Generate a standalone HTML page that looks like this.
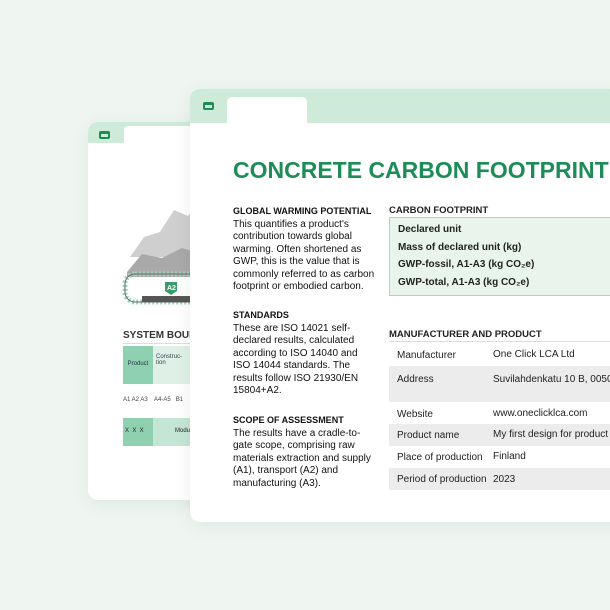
<!DOCTYPE html>
<html><head><style>
*{margin:0;padding:0;box-sizing:border-box}
body{width:610px;height:610px;background:#eff6f2;font-family:"Liberation Sans",sans-serif;position:relative;overflow:hidden;color:#222}
.card{position:absolute;background:#fff;border-radius:10px;box-shadow:0 4px 18px rgba(0,60,30,.08);overflow:hidden}
.hdr{position:absolute;left:0;top:0;right:0;background:#cdebd8}
.ico{position:absolute;width:11px;height:8px;border:2px solid #1f8a52;border-radius:2px;border-top-width:3px}
.p{position:absolute;font-size:10px;line-height:12.5px;color:#111}
.h{font-weight:bold;font-size:9px;margin-bottom:1px}
.row{position:absolute;left:0;width:240px;font-size:10px;color:#222}
.row span{position:absolute;top:0}
</style></head><body>
<!-- back card -->
<div class="card" style="left:88px;top:122px;width:160px;height:378px">
 <div class="hdr" style="height:21px"></div>
 <div style="position:absolute;left:36px;top:4px;width:124px;height:20px;background:#fff;border-radius:4px 0 0 0"></div>
 <div class="ico" style="left:11px;top:9px"></div>
 <svg style="position:absolute;left:34px;top:70px" width="110" height="115">
  <path d="M8 65 L22 45 L38 40 L52 18 L66 24 L82 6 L100 28 L100 65 Z" fill="#cfcfcf"/>
  <path d="M5 80 L20 62 L40 66 L60 56 L80 62 L100 58 L100 85 L5 85Z" fill="#a9a9a9"/>
  <rect x="3" y="82" width="100" height="28" rx="10" fill="none" stroke="#9fd4bb" stroke-width="5" stroke-dasharray="2 2"/>
  <rect x="3" y="82" width="100" height="28" rx="10" fill="none" stroke="#666" stroke-width="1"/>
  <path d="M43 90 h12 v9 l-6 4 l-6 -4z" fill="#3a9c6b"/>
  <text x="45" y="98" font-size="7" fill="#fff" font-weight="bold" font-family="Liberation Sans">A2</text>
  <rect x="20" y="104" width="80" height="6" fill="#555"/>
 </svg>
 <div style="position:absolute;left:35px;top:208px;font-size:10px;font-weight:bold;color:#333;white-space:nowrap">SYSTEM BOUNDARY</div>
 <div style="position:absolute;left:35px;top:221px;width:120px;height:1px;background:#ddd"></div>
 <div style="position:absolute;left:35px;top:224px;width:30px;height:38px;background:#8fd0b0;font-size:6px;text-align:center;padding-top:15px;color:#234">Product</div>
 <div style="position:absolute;left:65px;top:224px;width:95px;height:38px;background:#dff1e7;font-size:6px;padding:8px 0 0 3px;color:#345">Construc-<br>tion</div>
 <div style="position:absolute;left:35px;top:275px;font-size:6px;color:#444">A1 A2 A3 &nbsp;&nbsp; A4-A5 &nbsp; B1</div>
 <div style="position:absolute;left:35px;top:296px;width:30px;height:28px;background:#8fd0b0;font-size:6px;padding:10px 0 0 2px">X &nbsp;X &nbsp;X</div>
 <div style="position:absolute;left:65px;top:296px;width:95px;height:28px;background:#c5e6d5;font-size:6px;padding:10px 0 0 22px">Modules</div>
</div>
<!-- front card -->
<div class="card" style="left:190px;top:89px;width:440px;height:433px">
 <div class="hdr" style="height:34px"></div>
 <div style="position:absolute;left:37px;top:8px;width:80px;height:27px;background:#fff;border-radius:5px 5px 0 0"></div>
 <div class="ico" style="left:13px;top:13px"></div>
 <div style="position:absolute;left:43px;top:68px;font-size:23px;font-weight:bold;color:#1e8c57;white-space:nowrap">CONCRETE CARBON FOOTPRINT</div>
 <div class="p" style="left:43px;top:116px;width:142px"><div class="h">GLOBAL WARMING POTENTIAL</div>This quantifies a product's contribution towards global warming. Often shortened as GWP, this is the value that is commonly referred to as carbon footprint or embodied carbon.</div>
 <div class="p" style="left:43px;top:220px;width:142px"><div class="h">STANDARDS</div>These are ISO 14021 self-declared results, calculated according to ISO 14040 and ISO 14044 standards. The results follow ISO 21930/EN 15804+A2.</div>
 <div class="p" style="left:43px;top:325px;width:142px"><div class="h">SCOPE OF ASSESSMENT</div>The results have a cradle-to-gate scope, comprising raw materials extraction and supply (A1), transport (A2) and manufacturing (A3).</div>
 <div style="position:absolute;left:199px;top:116px;font-size:9.5px;font-weight:bold">CARBON FOOTPRINT</div>
 <div style="position:absolute;left:199px;top:128px;width:240px;height:79px;background:#e9f5ec;border:1px solid #a9d8b7;font-size:10px;font-weight:bold;line-height:17.5px;padding:3px 0 0 8px">Declared unit<br>Mass of declared unit (kg)<br>GWP-fossil, A1-A3 (kg CO₂e)<br>GWP-total, A1-A3 (kg CO₂e)</div>
 <div style="position:absolute;left:199px;top:240px;font-size:9.5px;font-weight:bold">MANUFACTURER AND PRODUCT</div>
 <div style="position:absolute;left:199px;top:252px;width:240px;height:1px;background:#ddd"></div>
 <div style="position:absolute;left:199px;top:253px;width:240px;height:208px">
  <div class="row" style="top:0;height:24px"><span style="left:8px;top:8px">Manufacturer</span><span style="left:104px;top:7px">One Click LCA Ltd</span></div>
  <div class="row" style="top:24px;height:36px;background:#ececec"><span style="left:8px;top:8px">Address</span><span style="left:104px;top:8px;white-space:nowrap">Suvilahdenkatu 10 B, 00500</span></div>
  <div class="row" style="top:60px;height:22px"><span style="left:8px;top:7px">Website</span><span style="left:104px;top:6px">www.oneclicklca.com</span></div>
  <div class="row" style="top:82px;height:22px;background:#ececec"><span style="left:8px;top:6px">Product name</span><span style="left:104px;top:5px;white-space:nowrap">My first design for product</span></div>
  <div class="row" style="top:104px;height:22px"><span style="left:8px;top:6px">Place of production</span><span style="left:104px;top:5px">Finland</span></div>
  <div class="row" style="top:126px;height:22px;background:#ececec"><span style="left:8px;top:6px">Period of production</span><span style="left:104px;top:6px">2023</span></div>
 </div>
</div>
</body></html>
